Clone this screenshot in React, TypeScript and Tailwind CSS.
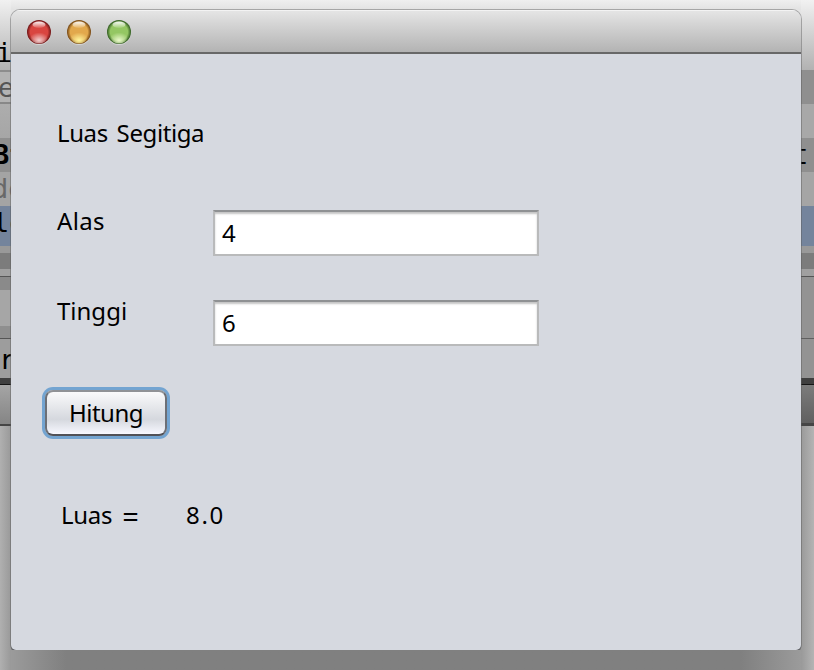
import { FC, ReactNode } from "react";

type StripRow = {
  className: string;
  text?: string;
  textClass?: string;
};

const leftRows: StripRow[] = [
  { className: "h-[70px] bg-linear-to-b from-[#f1f1f1] to-[#b2b2b2]", text: "i", textClass: "left-[-4px] top-[36px] text-black" },
  { className: "h-[2px] bg-[#8d8d8d]" },
  { className: "h-[30px] bg-[#b3b3b3]", text: "e", textClass: "left-[-2px] top-[-1px] text-[#555]" },
  { className: "h-[2px] bg-[#888]" },
  { className: "h-[34px] bg-linear-to-b from-[#adadad] to-[#a6a6a6]" },
  { className: "h-[34px] bg-[#8f8f8f]", text: "Bt", textClass: "left-[-7px] top-0 font-bold text-black" },
  { className: "h-[34px] bg-[#a4a4a4]", text: "de", textClass: "left-[-8px] top-0 text-[#686868]" },
  { className: "h-[40px] bg-[#74849c]", text: "le", textClass: "left-[-7px] top-0 text-black" },
  { className: "h-[7px] bg-[#999]" },
  { className: "h-[16px] bg-[#7c7c7c]" },
  { className: "h-[7px] bg-[#a0a0a0]" },
  { className: "h-px bg-[#555]" },
  { className: "h-[13px] bg-[#8a8a8a]" },
  { className: "h-[36px] bg-[#a6a6a6]" },
  { className: "h-[12px] bg-[#8f8f8f]" },
  { className: "h-px bg-[#555]" },
  { className: "h-[39px] bg-[#9d9d9d]", text: "r", textClass: "left-[-1px] top-[4px] text-black" },
  { className: "h-[6px] bg-[#3f3f3f]" },
  { className: "h-px bg-[#151515]" },
  { className: "h-[39px] bg-linear-to-b from-[#a5a5a5] to-[#858585]" },
  { className: "h-[2px] bg-[#454545]" },
  { className: "flex-1 bg-linear-to-r from-[#b0b0b0] to-[#999]" },
];

const rightRows: StripRow[] = [
  { className: "h-[70px] bg-linear-to-b from-[#f1f1f1] to-[#b2b2b2]" },
  { className: "h-[34px] bg-[#8f8f8f]" },
  { className: "h-[34px] bg-[#a8a8a8]" },
  { className: "h-[34px] bg-[#8f8f8f]", text: "t", textClass: "left-[-9px] top-0 text-black" },
  { className: "h-[34px] bg-[#a5a5a5]" },
  { className: "h-[40px] bg-[#74849c]" },
  { className: "h-[7px] bg-[#999]" },
  { className: "h-[16px] bg-[#7c7c7c]" },
  { className: "h-[7px] bg-[#a0a0a0]" },
  { className: "h-px bg-[#555]" },
  { className: "h-[61px] bg-[#939393]" },
  { className: "h-px bg-[#606060]" },
  { className: "h-[39px] bg-[#939393]" },
  { className: "h-[6px] bg-[#3f3f3f]" },
  { className: "h-px bg-[#151515]" },
  { className: "h-[38px] bg-linear-to-b from-[#7c7c7c] to-[#606060]" },
  { className: "h-[3px] bg-[#454545]" },
  { className: "flex-1 bg-linear-to-r from-[#999] to-[#b4b4b4]" },
];

const Strip: FC<{ rows: StripRow[]; className: string }> = ({ rows, className }) => (
  <div className={`flex h-full shrink-0 flex-col overflow-hidden ${className}`}>
    {rows.map((row, i) => (
      <div key={i} className={`relative w-full overflow-hidden ${row.className}`}>
        {row.text && (
          <span className={`absolute font-['DejaVu_Sans_Mono',monospace] text-[27px] leading-[34px] ${row.textClass}`}>
            {row.text}
          </span>
        )}
      </div>
    ))}
  </div>
);

type LightProps = { id: string; edge: string; mid: string; glow: string };

const Light: FC<LightProps> = ({ id, edge, mid, glow }) => (
  <svg width="26" height="26" viewBox="0 0 26 26">
    <defs>
      <radialGradient id={`${id}-body`} cx="50%" cy="50%" r="50%">
        <stop offset="0" stopColor={mid} />
        <stop offset="0.72" stopColor={mid} />
        <stop offset="1" stopColor={edge} />
      </radialGradient>
      <radialGradient id={`${id}-glow`} cx="50%" cy="75%" r="60%">
        <stop offset="0" stopColor={glow} />
        <stop offset="1" stopColor={glow} stopOpacity="0" />
      </radialGradient>
      <linearGradient id={`${id}-shine`} x1="0" y1="0" x2="0" y2="1">
        <stop offset="0" stopColor="#fff" stopOpacity="0.95" />
        <stop offset="1" stopColor="#fff" stopOpacity="0.1" />
      </linearGradient>
    </defs>
    <circle cx="13" cy="14" r="12" fill="#fff" opacity="0.4" />
    <circle cx="13" cy="13" r="12" fill={`url(#${id}-body)`} />
    <ellipse cx="13" cy="18" rx="8.5" ry="6.5" fill={`url(#${id}-glow)`} />
    <ellipse cx="13" cy="5.8" rx="6.5" ry="3.2" fill={`url(#${id}-shine)`} />
  </svg>
);

const Field: FC<{ value: string }> = ({ value }) => (
  <div className="flex h-[46px] w-[326px] border-2 border-t-[#8f9193] border-r-[#b9babb] border-b-[#b9babb] border-l-[#b9babb] bg-white pl-[7px] leading-[42px] shadow-[inset_0_2px_2px_#c5c5c5]">
    {value}
  </div>
);

const Label: FC<{ children: ReactNode; className?: string }> = ({ children, className = "" }) => (
  <span className={`whitespace-nowrap leading-8 ${className}`}>{children}</span>
);

export default function App() {
  return (
    <div className="flex h-[670px] w-[814px] overflow-hidden bg-[#888] font-['Noto_Sans',sans-serif] text-2xl text-black">
      <Strip rows={leftRows} className="w-[11px]" />
      <div className="z-10 flex w-[790px] shrink-0 flex-col bg-linear-to-b from-[#e4e4e4] from-50% to-[#8b8b8b] to-50%">
        <div className="h-[10px] shrink-0 bg-linear-to-b from-[#efefef] to-[#e2e2e2]" />
        <div className="flex h-[640px] shrink-0 flex-col overflow-hidden rounded-t-[9px] rounded-b-[5px] bg-[#d6d9e0] shadow-[0_1px_0_#55575c,0_0_0_1px_rgba(90,90,90,0.45)]">
          <header className="flex h-[44px] shrink-0 gap-[14px] border-b-2 border-[#686868] bg-linear-to-b from-[#e6e6e6] to-[#b3b3b3] pt-[9px] pl-[15px] shadow-[inset_0_1px_0_#f3f3f3]">
            <Light id="close" edge="#6d1516" mid="#d94540" glow="#f0cfcf" />
            <Light id="min" edge="#734513" mid="#e2a84c" glow="#fff59c" />
            <Light id="zoom" edge="#2f5a20" mid="#94c763" glow="#e9f8cb" />
          </header>
          <main className="flex flex-col items-start">
            <Label className="mt-[63px] ml-[46px] tracking-[-0.4px] [word-spacing:3px]">Luas Segitiga</Label>
            <div className="mt-[61px] flex h-[46px] items-start pl-[46px]">
              <Label className="w-[156px] -mt-[5px] tracking-[0.3px]">Alas</Label>
              <Field value="4" />
            </div>
            <div className="mt-[44px] flex h-[46px] items-start pl-[46px]">
              <Label className="w-[156px] -mt-[5px]">Tinggi</Label>
              <Field value="6" />
            </div>
            <button
              type="button"
              className="mt-[44px] ml-[34px] flex h-[46px] w-[122px] items-center justify-center rounded-[8px] border-2 border-t-[#909296] border-r-[#6c6f76] border-b-[#505157] border-l-[#6c6f76] bg-linear-to-b from-[#fafafb] via-[#d5d8de] via-65% to-[#f7f8ff] tracking-[-0.5px] shadow-[0_0_0_3px_#73a4d1]"
            >
              Hitung
            </button>
            <div className="mt-[63px] flex pl-[50px]">
              <Label className="flex w-[125px] gap-[10px] tracking-[-0.3px]">
                <span>Luas</span>
                <span className="text-[29px] leading-[33px]">=</span>
              </Label>
              <Label className="tracking-[1.7px]">8.0</Label>
            </div>
          </main>
        </div>
        <div className="flex-1 bg-linear-to-r from-[#9b9b9b] via-[#808080] via-7% to-[#808080] to-90%">
          <div className="ml-auto h-full w-[60px] bg-linear-to-r from-[#808080] to-[#9b9b9b]" />
        </div>
      </div>
      <Strip rows={rightRows} className="w-[13px]" />
    </div>
  );
}
